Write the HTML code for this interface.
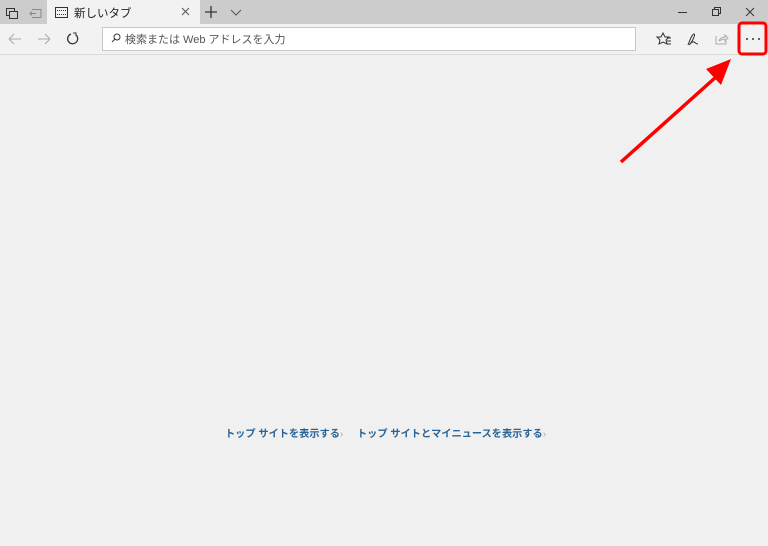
<!DOCTYPE html>
<html><head><meta charset="utf-8"><style>
body{margin:0;width:768px;height:546px;background:#f0f0f0;font-family:"Liberation Sans","Noto Sans CJK JP",sans-serif;position:relative;overflow:hidden}
.tb{position:absolute;left:0;top:0;width:768px;height:24px;background:#cccccc}
.tab{position:absolute;left:47px;top:0;width:153px;height:24px;background:#f2f2f2}
.bar{position:absolute;left:0;top:24px;width:768px;height:30px;background:#f2f2f2;border-bottom:1px solid #dcdcdc}
.addr{position:absolute;left:102px;top:27px;width:532px;height:22px;background:#fff;border:1px solid #c8c8c8}
.t{position:absolute;font-size:11.5px;color:#222;white-space:nowrap}
.lk{position:absolute;top:425px;font-size:10.2px;font-weight:bold;color:#2a6496;white-space:nowrap}
.lk span{color:#aaa;font-weight:normal}
</style></head><body>
<div class="tb"></div>
<div class="tab"></div>
<div class="bar"></div>
<div class="addr"></div>
<svg width="768" height="546" style="position:absolute;left:0;top:0">
<g fill="none" stroke="#333" stroke-width="1">
<rect x="6.5" y="8.5" width="8" height="7"/><rect x="9.5" y="11.5" width="8" height="7" fill="#ccc"/>
<path d="M32 9.5h9v8h-9M30 13.5h6M32 11.5l-2 2 2 2" stroke="#888"/>
<rect x="55.5" y="7.5" width="12" height="10"/><path d="M57 10.5h9M57 14.5h9" stroke-dasharray="1 1"/>
<path d="M182 8l7 7M189 8l-7 7" stroke="#555"/>
<path d="M211 6v12M205 12h12" stroke-width="1.3"/>
<path d="M231 10l5 5 5-5" stroke="#555"/>
<path d="M678 12.5h9"/>
<rect x="712.5" y="9.5" width="6" height="6"/><path d="M714.5 9.5v-2h6v6h-2"/>
<path d="M746 8l8 8M754 8l-8 8"/>
<path d="M9 39h12M9 39l5-5M9 39l5 5" stroke="#aaa"/>
<path d="M38 39h12M50 39l-5-5M50 39l-5 5" stroke="#aaa"/>
<path d="M71 34a5 5 0 1 0 5 1" stroke-width="1.3"/><path d="M73 33h3v3"/>
<circle cx="117" cy="37" r="3"/><path d="M115 39l-3 3"/>
<path d="M663 33l2 4h4l-3 3 1 4-4-2-4 2 1-4-3-3h4z"/><path d="M667 38h4M667 41h4M667 44h4"/>
<path d="M688 45c2-5 4-11 6-11s-2 8-4 10 2-3 4-2 2 2 4 2"/>
<path d="M716 36v8h10v-3M719 41c1-3 3-4 6-4v-2l3 3-3 3v-2c-3 0-4 1-6 2" stroke="#aaa"/>
</g>
<g fill="#333"><circle cx="747" cy="39" r="1"/><circle cx="753" cy="39" r="1"/><circle cx="759" cy="39" r="1"/></g>
<rect x="739" y="23" width="27" height="31" rx="3" fill="none" stroke="#f00" stroke-width="3"/>
<path d="M621 162L716 77" stroke="#f00" stroke-width="3.5"/>
<path d="M731 59L706 69 721 85z" fill="#f00"/>
</svg>
<div class="t" style="left:74px;top:5px">新しいタブ</div>
<div class="t" style="left:125px;top:31px;font-size:11px;color:#555">検索または Web アドレスを入力</div>
<div class="lk" style="left:225px">トップ サイトを表示する<span>›</span></div>
<div class="lk" style="left:357px">トップ サイトとマイニュースを表示する<span>›</span></div>
</body></html>
